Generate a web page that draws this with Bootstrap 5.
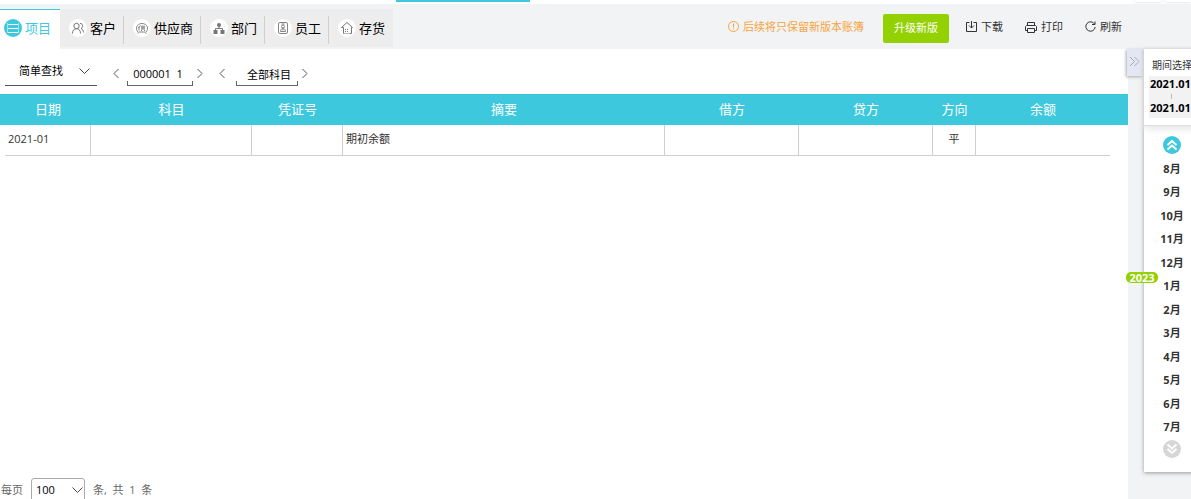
<!DOCTYPE html>
<html lang="zh-CN">
<head>
<meta charset="utf-8">
<meta name="viewport" content="width=device-width, initial-scale=1">
<title>项目明细账</title>
<link rel="stylesheet" href="https://cdn.jsdelivr.net/npm/bootstrap@5.3.0/dist/css/bootstrap.min.css">
<script src="https://cdn.jsdelivr.net/npm/bootstrap@5.3.0/dist/js/bootstrap.bundle.min.js" defer></script>
<style>
:root { --cyan: #3ec8de; --pale: #f2f3f5; --line: #cfcfcf; }
body { font-family: "Open Sans", "Noto Sans CJK SC", sans-serif; font-size: 11px; line-height: 16px; color: #333; background: #fff; }
svg { display: block; fill: none; stroke: currentColor; flex: none; }
button { line-height: 16px; }
.plain { background: none; border: 0; padding: 0; color: inherit; }
.top-strip { height: 4px; padding-left: 396px; }
.top-strip .current { width: 134px; height: 2px; background: var(--cyan); }
.top-strip .chip { height: 2px; width: 26px; box-shadow: 0 0 3px #ccc; }
.app-bar { height: 45px; background: var(--pale); padding-right: 69px; }
.tabs { margin-top: 5px; height: 38px; }
.tabs a { font-size: 13px; line-height: 18px; color: #000; text-decoration: none; background: #ededed; padding: 0 8px 0 9px; gap: 3px; position: relative; }
.tabs a.active { color: var(--cyan); background: #fff; border-top: 1px solid var(--cyan); height: 40px; padding: 0 9px 3px 4px; width: 60px; }
.tabs a + a + a::before { content: ""; position: absolute; left: -1px; top: 7px; bottom: 3px; width: 1px; background: #d0d0d0; }
.tabs .disc { width: 18px; height: 18px; border-radius: 50%; background: #fff; color: #777; }
.tabs .active .disc { background: var(--cyan); color: #fff; }
.notice { color: #f7a440; gap: 4px; margin-right: 19px; }
.upgrade { background: #94d103; color: #fff; font-size: 11px; border: 0; border-radius: 2px; width: 66px; height: 29px; padding: 0; margin-right: 17px; }
.upgrade:hover { background: #86bd03; color: #fff; }
.tools { gap: 22px; }
.tools button { gap: 4px; }
.filters { height: 45px; padding-left: 5px; color: #000; }
.filters select { font-size: 11px; width: 92px; height: 28px; border: 0; border-bottom: 1px solid #555; border-radius: 0; padding: 0 0 0 14px; appearance: none; background: none; color: #000; }
.pick { position: relative; }
.pick > svg { position: absolute; pointer-events: none; color: #444; right: 7px; top: 10px; }
.arrow { width: 14px; height: 20px; color: #555; }
.bracket { position: relative; margin: 5px 0 0 7px; height: 23px; }
.bracket::after { content: ""; position: absolute; inset: auto 0 0 0; height: 5px; border: 1px solid #666; border-top: 0; pointer-events: none; }
.bracket input { width: 100%; height: 22px; border: 0; outline: 0; padding: 0; background: none; font-size: 11px; color: #000; text-align: center; white-space: pre; }
.ledger { padding: 0 18px 0 5px; background: linear-gradient(var(--cyan), var(--cyan)) 0 0 / 100% 31px no-repeat; }
.ledger table { table-layout: fixed; width: 100%; border-collapse: separate; border-spacing: 0; }
.ledger th { height: 31px; padding: 0 0 2px; font-size: 13px; font-weight: 400; color: #fff; text-align: center; }
.ledger td { height: 31px; padding: 0 3px 2px; border-right: 1px solid var(--line); border-bottom: 1px solid var(--line); }
.ledger td:last-child { border-right: 0; }
.pager { gap: 8px; color: #666; padding-left: 1px; height: 24px; margin-bottom: -3px; }
.pager select { font-size: 11px; width: 54px; height: 24px; padding: 0 4px; border: 1px solid #aaa; border-radius: 3px; color: #000; background: #fff; appearance: none; }
.pager .pick > svg { right: 2px; top: 9px; }
.rail { width: 63px; background: var(--pale); padding-left: 16px; position: relative; }
.fold { position: absolute; left: -1px; top: 0; width: 17px; height: 27px; background: #e3e7f3; color: #aaa; box-shadow: -1px 1px 3px #aaa; }
.fold svg { margin: 0 0 2px 2px; }
.period { width: 56px; height: 423px; background: #fff; box-shadow: 0 1px 4px #999; position: relative; }
.range { height: 77px; padding: 8px 0 0 5px; border-bottom: 1px solid #ddd; box-shadow: 0 3px 7px #e5e5e5; }
.range .caption { font-size: 10px; padding-left: 3px; color: #333; white-space: nowrap; }
.range .dates { background: #f2f2f2; color: #000; height: 42px; margin-top: 3px; padding-left: 1px; }
.range .dates button { display: block; font-weight: 700; }
.range .dates i { display: block; width: 1px; height: 5px; margin: 2px 0 1px 21px; background: #bbb; }
.scroller { padding-top: 10px; }
.months { height: 282px; margin: 3px 0 1px; }
.months button { flex: 1; font-weight: 700; }
.round { width: 18px; height: 18px; border-radius: 50%; color: #fff; background: var(--cyan); }
.round.off { background: #d6d6d6; }
.year { position: absolute; left: -18px; top: 223px; width: 32px; height: 11px; line-height: 11px; border-radius: 5px; background: #94d103; color: #fff; font-size: 11px; font-weight: 700; text-align: center; }
</style>
</head>
<body class="vh-100 overflow-hidden d-flex flex-column">
<div class="top-strip d-flex flex-shrink-0">
  <div class="current me-auto"></div>
  <div class="chip me-1"></div><div class="chip"></div>
</div>
<header class="app-bar d-flex flex-shrink-0 justify-content-between">
  <nav class="tabs d-flex text-nowrap">
    <a href="#" class="active d-flex align-items-center"><span class="disc"><svg width="18" height="18"><path d="M4 5.500h10M4 9.500h10M4 13.500h10"/><path stroke-opacity=".5" d="M3.500 4v10M14.500 4v10"/></svg></span>项目</a>
    <a href="#" class="d-flex align-items-center"><span class="disc"><svg width="18" height="18"><circle cx="7.500" cy="7" r="2.700"/><path d="M3.500 14.500c0-3 1.500-4.800 4-4.800s4 1.800 4 4.800M11 4.500c3-.5 3.500 4 1 5 1.500.7 2.500 2 2.500 4"/></svg></span>客户</a>
    <a href="#" class="d-flex align-items-center"><span class="disc"><svg width="18" height="18" stroke-width=".9"><path d="M5 13c-3-3-1.500-8.500 4-8.500S16 10 13 13M4.500 14.500l2-1.500h5l2 1.500M6 7.500v4M7.500 6.500l-2 2.500M8 8h4M8 10h4M9 6.500v3.500M11 6.500v3.500M9 11l-1 1M11 11l1 1"/></svg></span>供应商</a>
    <a href="#" class="d-flex align-items-center"><span class="disc"><svg width="18" height="18"><path d="M9 6v4M5.500 12V9.500h7V12"/><g fill="currentColor" stroke="none"><circle cx="9" cy="6" r="2"/><rect x="3.500" y="11" width="4" height="4"/><rect x="10.500" y="11" width="4" height="4"/></g></svg></span>部门</a>
    <a href="#" class="d-flex align-items-center"><span class="disc"><svg width="18" height="18" stroke-width=".9"><rect x="4.500" y="3.500" width="9" height="11" rx="1.500"/><circle cx="9" cy="7.500" r="1.500"/><path d="M7.500 5h3M6.500 12.500c0-4 5-4 5 0zM9 9.500v2"/></svg></span>员工</a>
    <a href="#" class="d-flex align-items-center"><span class="disc"><svg width="18" height="18"><path d="M5.500 14.500v-6h-2L9 3.500l5.500 5h-1v6H12"/><path stroke-dasharray="1 1" d="M7 10.500h4M7 12.500h4M5.500 14.500H12"/></svg></span>存货</a>
  </nav>
  <div class="d-flex align-items-center text-nowrap">
    <div class="notice d-flex align-items-center"><svg width="11" height="11"><circle cx="5.500" cy="5.500" r="5"/><path d="M5.500 2.500v4M5.500 7.500v1"/></svg>后续将只保留新版本账簿</div>
    <button type="button" class="btn upgrade mt-1">升级新版</button>
    <div class="tools d-flex">
      <button type="button" class="plain d-flex align-items-center"><svg width="11" height="11"><path d="M3.500 1.500h-3v9h10v-9h-3M5.500 0v7M3 4.500L5.500 7 8 4.500"/></svg>下载</button>
      <button type="button" class="plain d-flex align-items-center"><svg width="12" height="12"><path d="M2.500 4V1.500h7V4M2.500 9.500h-2v-4l1-1h9l1 1v4h-2M2.500 7.500h7v4h-7z"/></svg>打印</button>
      <button type="button" class="plain d-flex align-items-center"><svg width="11" height="11"><path d="M9.500 3A4.700 4.700 0 1 0 10.200 6M10 .5v3H7"/></svg>刷新</button>
    </div>
  </div>
</header>
<div class="d-flex flex-grow-1">
  <main class="flex-grow-1 d-flex flex-column">
    <form class="filters d-flex align-items-center">
      <div class="pick">
        <select aria-label="查找方式"><option>简单查找</option></select>
        <svg width="11" height="7"><path d="M.5.500l5 5 5-5"/></svg>
      </div>
      <button type="button" class="plain arrow ms-2 mt-1 ps-1" aria-label="上一个项目"><svg class="ms-1" width="6" height="11"><path d="M5.500 1L1 5.500 5.500 10"/></svg></button>
      <div class="bracket ms-2" style="width:66px"><input type="text" class="pe-1" aria-label="项目" value="000001&#160; 1"></div>
      <button type="button" class="plain arrow mt-1 ps-1" aria-label="下一个项目"><svg width="6" height="11"><path d="M.5 1L5 5.500.5 10"/></svg></button>
      <button type="button" class="plain arrow mt-1 ms-2" aria-label="上一个科目"><svg class="ms-1" width="6" height="11"><path d="M5.500 1L1 5.500 5.500 10"/></svg></button>
      <div class="bracket" style="width:62px"><input type="text" class="ps-1" aria-label="科目" value="全部科目"></div>
      <button type="button" class="plain arrow mt-1 ps-1" aria-label="下一个科目"><svg width="6" height="11"><path d="M.5 1L5 5.500.5 10"/></svg></button>
    </form>
    <div class="ledger">
      <table>
        <colgroup><col style="width:86px"><col style="width:161px"><col style="width:91px"><col style="width:322px"><col style="width:134px"><col style="width:134px"><col style="width:43px"><col style="width:134px"></colgroup>
        <thead><tr><th>日期</th><th>科目</th><th>凭证号</th><th>摘要</th><th>借方</th><th>贷方</th><th>方向</th><th>余额</th></tr></thead>
        <tbody><tr><td>2021-01</td><td></td><td></td><td>期初余额</td><td></td><td></td><td class="text-center">平</td><td></td></tr></tbody>
      </table>
    </div>
    <footer class="pager d-flex align-items-center mt-auto">
      <label for="size">每页</label>
      <div class="pick">
        <select id="size"><option>100</option></select>
        <svg width="11" height="7"><path d="M.5.500l5 5 5-5"/></svg>
      </div>
      <span>条,&nbsp; 共&nbsp; 1&nbsp; 条</span>
    </footer>
  </main>
  <aside class="rail flex-shrink-0">
    <button type="button" class="plain fold" aria-label="收起"><svg width="11" height="11"><path d="M1 1l4.500 4.500L1 10M5.500 1L10 5.500 5.500 10"/></svg></button>
    <div class="period">
      <div class="range">
        <div class="caption">期间选择</div>
        <div class="dates"><button type="button" class="plain">2021.01</button><i></i><button type="button" class="plain">2021.01</button></div>
      </div>
      <div class="scroller d-flex flex-column align-items-center">
        <button type="button" class="plain round" aria-label="向前"><svg width="18" height="18" stroke-width="2"><path d="M4.500 9L9 5l4.500 4M4.500 13.500l4.500-4 4.500 4"/></svg></button>
        <div class="months d-flex flex-column">
          <button type="button" class="plain">8月</button><button type="button" class="plain">9月</button><button type="button" class="plain">10月</button><button type="button" class="plain">11月</button><button type="button" class="plain">12月</button><button type="button" class="plain">1月</button><button type="button" class="plain">2月</button><button type="button" class="plain">3月</button><button type="button" class="plain">4月</button><button type="button" class="plain">5月</button><button type="button" class="plain">6月</button><button type="button" class="plain">7月</button>
        </div>
        <button type="button" class="plain round off" aria-label="向后"><svg width="18" height="18" stroke-width="2"><path d="M4.500 4.500l4.500 4 4.500-4M4.500 9l4.500 4L13.500 9"/></svg></button>
      </div>
      <span class="year">2023</span>
    </div>
  </aside>
</div>
</body>
</html>
